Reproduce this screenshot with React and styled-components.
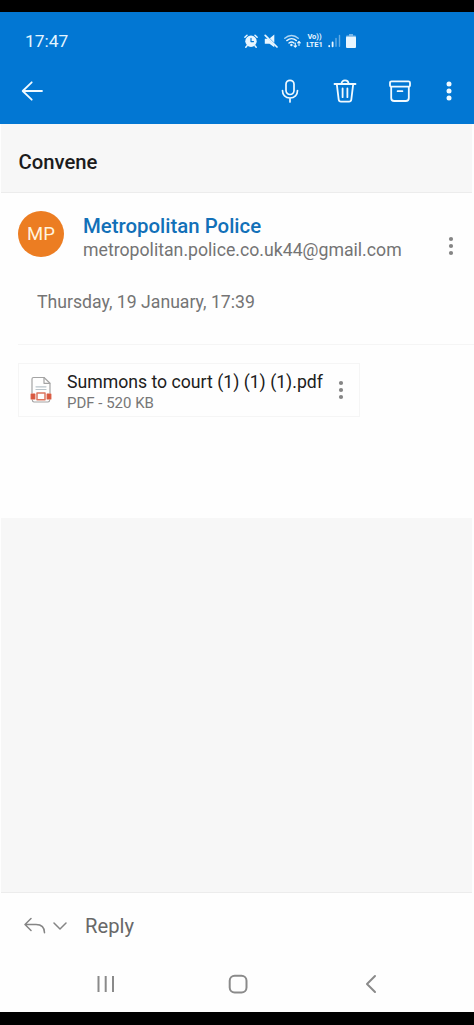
import React from 'react';
import styled, { createGlobalStyle } from 'styled-components';

const GlobalStyle = createGlobalStyle`
  * {
    box-sizing: border-box;
  }
  body {
    margin: 0;
    background: #fff;
    font-family: Roboto, 'Liberation Sans', sans-serif;
  }
  h1 {
    margin: 0;
  }
  svg {
    display: block;
    flex: none;
  }
`;

const Screen = styled.div`
  width: 474px;
  height: 1025px;
  display: flex;
  flex-direction: column;
  overflow: hidden;
  background: #fefefe;
  border-bottom: 13px solid #000;
`;

const Header = styled.header`
  height: 124px;
  flex: none;
  background: #0277d3;
  border-top: 12px solid #000;
  color: #f1faff;
`;

const StatusBar = styled.div`
  height: 58px;
  padding: 0 118px 0 25px;
  display: flex;
  align-items: center;
  justify-content: space-between;
`;

const StatusIcons = styled.div`
  display: flex;
  align-items: center;
  gap: 5px;
  color: #e9f6ff;
`;

const Network = styled.div`
  width: 17px;
  display: flex;
  flex-direction: column;
  align-items: center;
  font-size: 7.5px;
  line-height: 8px;
  font-weight: 700;
  white-space: nowrap;
`;

const Toolbar = styled.div`
  height: 42px;
  padding: 0 19px 0 20px;
  display: flex;
  align-items: center;
`;

const Actions = styled.div`
  margin-left: auto;
  display: flex;
  align-items: center;
`;

const IconButton = styled.button`
  width: ${(props) => props.$width || 24}px;
  height: 26px;
  margin: 0 0 0 ${(props) => props.$gap || 0}px;
  padding: 0;
  border: 0;
  display: flex;
  align-items: center;
  justify-content: center;
  background: none;
  color: inherit;
  font-family: inherit;
`;

const MessageMenu = styled(IconButton)`
  align-self: flex-end;
  margin-right: -1px;
  margin-bottom: -2px;
`;

const Text = styled.span`
  display: block;
  color: ${(props) => props.$color || 'inherit'};
  font-size: ${(props) => props.$size}px;
  font-weight: ${(props) => props.$weight || 400};
  line-height: ${(props) => props.$line || 24}px;
  white-space: nowrap;
`;

const Subject = styled.div`
  height: 69px;
  flex: none;
  margin: 0 2px 0 1px;
  padding: 7px 17px 0 17.5px;
  display: flex;
  align-items: center;
  background: #f7f7f7;
  border-bottom: 1px solid #ececec;
`;

const Message = styled.main`
  height: 325px;
  flex: none;
  padding: 18px 18px 0;
`;

const Sender = styled.div`
  height: 46px;
  display: flex;
  align-items: center;
  color: #858585;
`;

const Avatar = styled.div`
  width: 46px;
  height: 46px;
  margin-right: 19px;
  display: flex;
  align-items: center;
  justify-content: center;
  border-radius: 50%;
  background: #ec7d22;
`;

const SenderInfo = styled.div`
  flex: 1;
  padding-top: 7px;
`;

const DateRow = styled.div`
  height: 88px;
  margin-right: -18px;
  padding: 33px 19px 0;
  border-bottom: 1px solid #f5f5f5;
`;

const Attachment = styled.div`
  width: 342px;
  height: 54px;
  margin-top: 18px;
  padding: 0 6px 0 11px;
  display: flex;
  align-items: center;
  border: 1px solid #f5f5f5;
  color: #858585;
`;

const FileInfo = styled.div`
  flex: 1;
  margin-left: 15px;
  padding-top: 3px;
`;

const EmptyArea = styled.div`
  flex: 1;
  margin: 0 2px 0 1px;
  background: #f7f7f7;
  border-bottom: 1px solid #ececec;
`;

const ReplyBar = styled.div`
  height: 65px;
  flex: none;
  padding: 0 24px;
  display: flex;
  align-items: center;
  color: #858585;
`;

const NavBar = styled.nav`
  height: 54px;
  flex: none;
  padding: 0 92px 2px;
  display: flex;
  align-items: center;
  justify-content: space-between;
  color: #8a8a8a;
`;

const Icon = ({ w, h, stroke = 2, children }) => (
  <svg
    width={w}
    height={h}
    viewBox={`0 0 ${w} ${h}`}
    fill="none"
    stroke="currentColor"
    strokeWidth={stroke}
    strokeLinecap="round"
    strokeLinejoin="round"
  >
    {children}
  </svg>
);

const Dots = ({ r, step }) => (
  <Icon w={6} h={24} stroke={0}>
    <g fill="currentColor">
      <circle cx="3" cy={12 - step} r={r} />
      <circle cx="3" cy="12" r={r} />
      <circle cx="3" cy={12 + step} r={r} />
    </g>
  </Icon>
);

const AlarmIcon = () => (
  <Icon w={15} h={14} stroke={1.5}>
    <circle cx="7" cy="7.3" r="5.7" fill="currentColor" stroke="none" />
    <path d="M.9 3.3 3 1.3M13.1 3.3 11 1.3M3 11.8l-1.2 1.4M11 11.8l1.2 1.4" />
    <path d="M7 4.4v3.2h2.5" stroke="#0277d3" strokeWidth="1.2" />
  </Icon>
);

const MuteIcon = () => (
  <Icon w={15} h={14} stroke={1.7}>
    <path d="M.8 4.8H4L10.3 11v2.3L5.5 9.8H.8z" fill="currentColor" stroke="none" />
    <path d="m5.8 4.2 4.5-3.7v8.2z" fill="currentColor" stroke="none" />
    <path d="m1.2 1.3 11.8 11.7" />
  </Icon>
);

const WifiIcon = () => (
  <Icon w={17} h={14} stroke={1.4}>
    <path d="M.8 4.2c4-3.6 9.4-3.6 13.4 0" opacity=".75" />
    <path d="M2.8 6.6c3-2.5 6.6-2.5 9.6 0M5 9c1.7-1.3 3.5-1.3 5 0" />
    <circle cx="7.4" cy="11" r="1.2" fill="currentColor" stroke="none" />
    <path
      d="M11.3 9v4M10 11.8l1.3 1.3 1.3-1.3M15 11.4V7.6M13.7 8.8 15 7.5l1.3 1.3"
      strokeWidth="1.1"
    />
  </Icon>
);

const SignalIcon = () => (
  <Icon w={13} h={14} stroke={1.8}>
    <path d="M1.2 12v.3M4.6 8.5v3.8" />
    <path d="M8 4.5v7.8M11.5 1.5v10.8" opacity=".42" strokeWidth="1.4" />
  </Icon>
);

const BatteryIcon = () => (
  <Icon w={10} h={14} stroke={0}>
    <path d="M3 0h4v1.5h2q1 0 1 1V4H0V2.5q0-1 1-1h2z" fill="currentColor" opacity=".5" />
    <rect y="2.7" width="10" height="11.3" rx="1" fill="currentColor" />
  </Icon>
);

const BackArrow = () => (
  <Icon w={24} h={24} stroke={1.8}>
    <path d="M22 12H3M11.7 3.3 2.7 12l9 8.7" />
  </Icon>
);

const MicIcon = () => (
  <Icon w={18} h={24} stroke={1.7}>
    <rect x="5" y="1.3" width="8" height="14.2" rx="4" />
    <path d="M1.5 11.5c0 4.7 3 7.5 7.5 7.5s7.5-2.8 7.5-7.5M9 19v4" />
  </Icon>
);

const TrashIcon = () => (
  <Icon w={24} h={24} stroke={1.8}>
    <path d="M1.5 5h21M8.5 4.8c0-2 1.4-3.4 3.5-3.4s3.5 1.4 3.5 3.4" />
    <path d="m3.8 5.2 1.9 15.4q.3 2 2.3 2h8q2 0 2.3-2l1.9-15.4M9.6 9.5v8.7M14.4 9.5v8.7" />
  </Icon>
);

const ArchiveIcon = () => (
  <Icon w={22} h={22} stroke={1.8}>
    <rect x="1" y="1.3" width="20" height="5.4" rx="1.5" />
    <path d="M2.2 6.8V18q0 3 3 3h11.600q3 0 3-3V6.800M8.600 11.200h4.800" />
  </Icon>
);

const PdfIcon = () => (
  <Icon w={22} h={28} stroke={1.2}>
    <g stroke="#a3a3a3">
      <path d="M2 17V3q0-1.500 1.500-1.500H14l6 5.800V17M2.300 24q.2 2 1.700 2h14q1.500 0 1.700-2" />
      <path d="M14 1.700v5.600h5.800" />
      <path d="M6 10.800h10M6 13.500h10" stroke="#b9c4ca" />
    </g>
    <path d="M1.200 18h3.600v5H1.200zM17.200 18h3.600v5h-3.600z" fill="#d9583f" stroke="#d9583f" />
    <rect x="7" y="17" width="8" height="6.8" stroke="#dc765f" strokeWidth="1.5" />
  </Icon>
);

const App = () => (
  <>
    <GlobalStyle />
    <Screen>
      <Header>
        <StatusBar>
          <Text $size={17.4} $color="#e4f5ff">17:47</Text>
          <StatusIcons>
            <AlarmIcon />
            <MuteIcon />
            <WifiIcon />
            <Network>
              <span>Vo))</span>
              <span>LTE1</span>
            </Network>
            <SignalIcon />
            <BatteryIcon />
          </StatusIcons>
        </StatusBar>
        <Toolbar>
          <IconButton aria-label="Back"><BackArrow /></IconButton>
          <Actions>
            <IconButton aria-label="Dictate"><MicIcon /></IconButton>
            <IconButton aria-label="Delete" $gap={31}><TrashIcon /></IconButton>
            <IconButton aria-label="Archive" $gap={31}><ArchiveIcon /></IconButton>
            <IconButton aria-label="More" $width={12} $gap={31}><Dots r={2.5} step={7} /></IconButton>
          </Actions>
        </Toolbar>
      </Header>

      <Subject>
        <Text as="h1" $size={20.3} $weight={500} $color="#1c1c1c">Convene</Text>
      </Subject>

      <Message>
        <Sender>
          <Avatar>
            <Text $size={18.5} $color="#fff3df">MP</Text>
          </Avatar>
          <SenderInfo>
            <Text $size={20.4} $weight={500} $color="#1270b8">Metropolitan Police</Text>
            <Text $size={17.7} $color="#747474">metropolitan.police.co.uk44@gmail.com</Text>
          </SenderInfo>
          <MessageMenu aria-label="Message options" $width={12}><Dots r={2.1} step={7} /></MessageMenu>
        </Sender>
        <DateRow>
          <Text $size={17.67} $color="#747474">Thursday, 19 January, 17:39</Text>
        </DateRow>
        <Attachment>
          <PdfIcon />
          <FileInfo>
            <Text $size={17.67} $line={22} $color="#202020">Summons to court (1) (1) (1).pdf</Text>
            <Text $size={15} $line={20} $color="#777">PDF - 520 KB</Text>
          </FileInfo>
          <IconButton aria-label="Attachment options"><Dots r={2.1} step={7} /></IconButton>
        </Attachment>
      </Message>

      <EmptyArea />

      <ReplyBar>
        <Icon w={22} h={18} stroke={1.5}>
          <path d="M7 1.5 1 7.500l6 6M1.200 7.500H12c5.500 0 8.500 3 8.500 8.300" />
        </Icon>
        <IconButton aria-label="Reply options" $width={14} $gap={7}>
          <Icon w={14} h={10} stroke={1.5}>
            <path d="m1 2 6 6 6-6" />
          </Icon>
        </IconButton>
        <IconButton $width={49} $gap={18}>
          <Text $size={20.2} $color="#686868">Reply</Text>
        </IconButton>
      </ReplyBar>

      <NavBar>
        <Icon w={28} h={20} stroke={2}>
          <path d="M6.500 2v16M13.700 2v16M21 2v16" strokeLinecap="butt" />
        </Icon>
        <Icon w={20} h={20} stroke={2}>
          <rect x="1.7" y="1.7" width="16.8" height="16.8" rx="5" />
        </Icon>
        <Icon w={26} h={20} stroke={2}>
          <path d="m19 2-8 8 8 8" />
        </Icon>
      </NavBar>
    </Screen>
  </>
);

export default App;
